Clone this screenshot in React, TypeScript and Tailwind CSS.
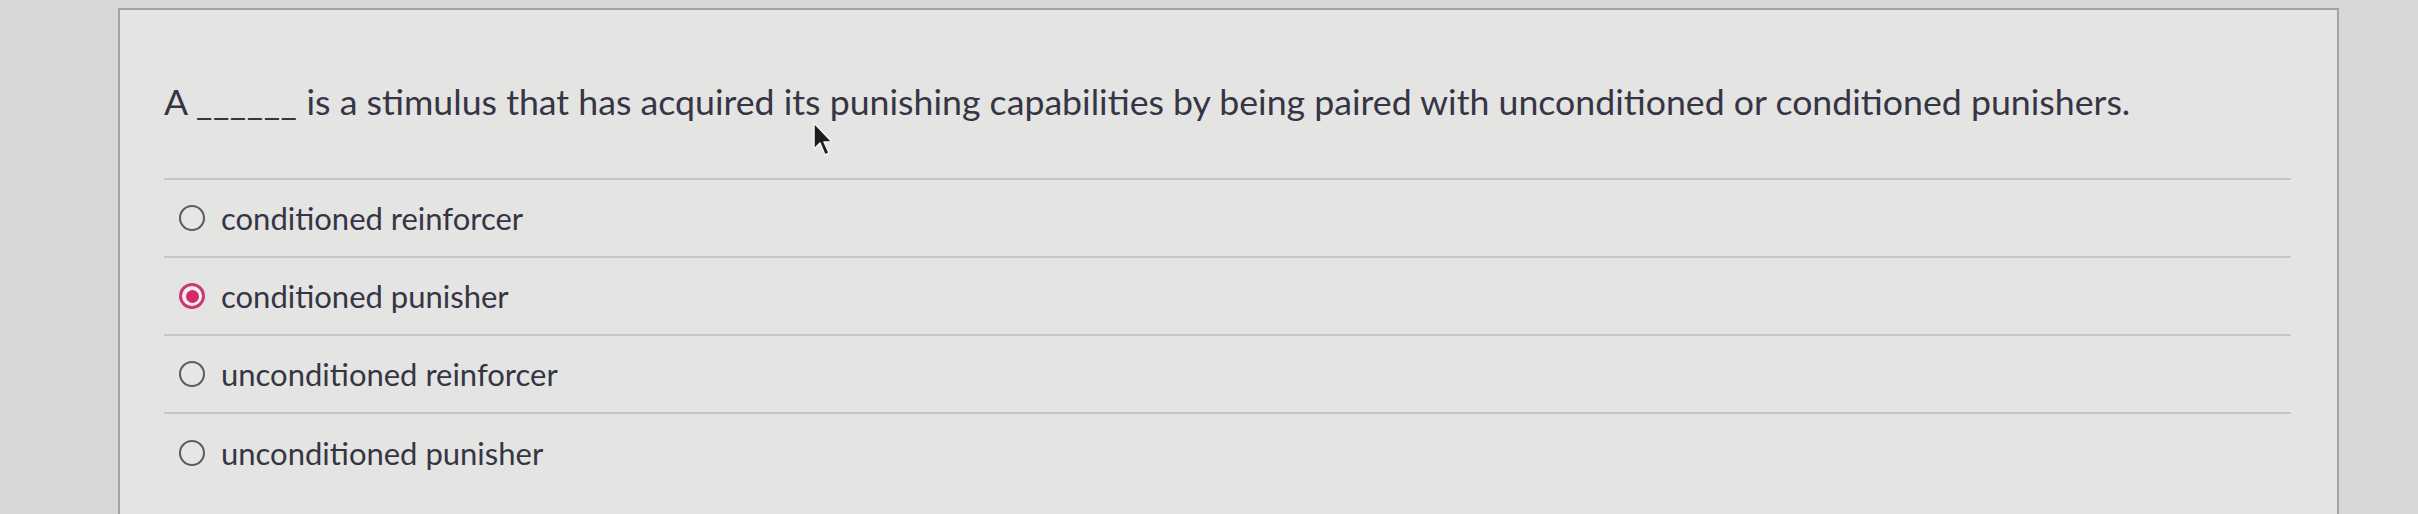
import React, { useState } from "react";

const options = [
  "conditioned reinforcer",
  "conditioned punisher",
  "unconditioned reinforcer",
  "unconditioned punisher",
];

function Radio({ checked }: { checked: boolean }) {
  if (checked) {
    return (
      <span className="flex h-[26px] w-[26px] shrink-0 items-center justify-center rounded-full border-[3px] border-[#c93a76] bg-[#f4eef0]">
        <span className="h-[13px] w-[13px] rounded-full bg-[#d22a6c]" />
      </span>
    );
  }
  return <span className="h-[26px] w-[26px] shrink-0 rounded-full border-[2.5px] border-[#5a5a62] bg-[#e6e6e4]" />;
}

export default function App() {
  const [selected, setSelected] = useState(1);

  return (
    <div className="relative h-[514px] w-full overflow-hidden bg-[#d8d8d6] pl-[118px] pt-[8px] font-['Lato',sans-serif] text-[#363545]">
      <div className="h-full w-[2221px] border-l-2 border-r-2 border-t-2 border-[#a3a3a3] bg-[#e4e4e2] pl-[44px] pr-[46px]">
        <p className="border-b-2 border-[#c6c6c4] pb-[56px] pt-[72px] text-[35.7px] leading-[40px]">
          A <span className="tracking-[0.5px]">______</span> is a stimulus that has acquired its punishing capabilities by
          being paired with unconditioned or conditioned punishers.
        </p>
        <div className="flex flex-col">
          {options.map((label, i) => (
            <label
              key={label}
              onClick={() => setSelected(i)}
              className={
                "flex h-[78px] cursor-pointer items-center pl-[15px] text-[31px] " +
                (i < options.length - 1 ? "border-b-2 border-[#c6c6c4]" : "")
              }
            >
              <Radio checked={selected === i} />
              <span className="ml-[16px]">{label}</span>
            </label>
          ))}
        </div>
      </div>

      {/* mouse pointer */}
      <svg className="absolute left-[812px] top-[122px]" width="22" height="36" viewBox="0 0 22 36">
        <path
          d="M2 1 L2 27 L8 21 L13 33 L17 31 L12 20 L20 20 Z"
          fill="#1c1c1e"
          stroke="#f4f4f4"
          strokeWidth="1.5"
          strokeLinejoin="round"
        />
      </svg>
    </div>
  );
}
